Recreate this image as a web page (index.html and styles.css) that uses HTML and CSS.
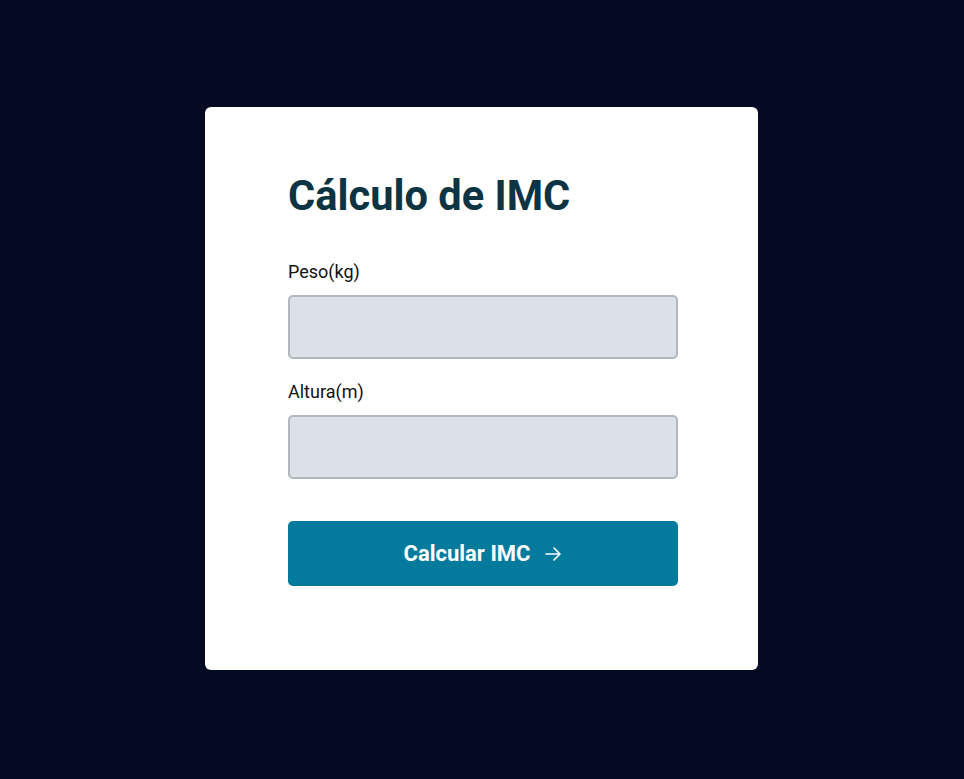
FILE: index.html
```html
<!DOCTYPE html>
<html lang="pt-BR">
<head>
  <meta charset="UTF-8">
  <title>Cálculo de IMC</title>
  <link rel="stylesheet" href="styles.css">
</head>
<body>

  <main class="card">
    <h1 class="title">Cálculo de IMC</h1>

    <form class="form" onsubmit="return false">
      <label class="label" for="peso">Peso(kg)</label>
      <input class="input" id="peso" type="text">

      <label class="label label-next" for="altura">Altura(m)</label>
      <input class="input" id="altura" type="text">

      <button class="button" type="submit">
        Calcular IMC
        <svg class="arrow" width="18" height="18" viewBox="0 0 18 18" fill="none" stroke="currentColor" stroke-width="1.6" stroke-linecap="round" stroke-linejoin="round">
          <path d="M2 9h14M10 3l6 6-6 6"/>
        </svg>
      </button>
    </form>
  </main>

</body>
</html>
```

FILE: styles.css
```css
html, body { margin: 0; padding: 0; height: 100%; }
body {
  background: #030a22;
  font-family: Roboto, "Liberation Sans", sans-serif;
  display: flex;
  justify-content: center;
  padding-top: 107px;
  box-sizing: border-box;
}

.card {
  width: 553px;
  height: 563px;
  box-sizing: border-box;
  padding: 64px 80px 0 83px;
  background: #fff;
  border-radius: 6px;
  margin-left: -1px;
}

.title {
  margin: 0;
  font-size: 41.6px;
  font-weight: 700;
  color: #0c3442;
  line-height: 49px;
}

.form { display: flex; flex-direction: column; width: 390px; margin-top: 41px; }

.label { font-size: 18px; color: #121212; line-height: normal; margin-bottom: 13px; }
.label-next { margin-top: 22px; }

.input {
  height: 64px;
  box-sizing: border-box;
  border: 2px solid #b1b7bf;
  border-radius: 5px;
  background: #dce1e8;
  font: inherit;
  padding: 0 14px;
}

.button {
  margin-top: 42px;
  height: 65px;
  border: 0;
  border-radius: 5px;
  background: #047a9c;
  color: #fff;
  font-family: inherit;
  font-size: 22px;
  font-weight: 700;
  display: flex;
  align-items: center;
  justify-content: center;
  gap: 14px;
  cursor: pointer;
}
.arrow { margin-top: 1px; }
```
